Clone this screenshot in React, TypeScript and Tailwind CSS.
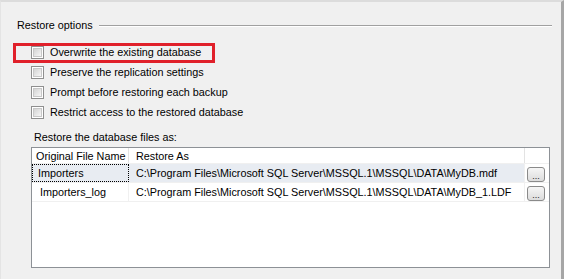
import React from "react";

const font = { fontFamily: '"Liberation Sans", Arial, sans-serif' };

const options = [
  "Overwrite the existing database",
  "Preserve the replication settings",
  "Prompt before restoring each backup",
  "Restrict access to the restored database",
];

const files = [
  { name: "Importers", path: "C:\\Program Files\\Microsoft SQL Server\\MSSQL.1\\MSSQL\\DATA\\MyDB.mdf", selected: true },
  { name: "Importers_log", path: "C:\\Program Files\\Microsoft SQL Server\\MSSQL.1\\MSSQL\\DATA\\MyDB_1.LDF", selected: false },
];

function CheckBox() {
  return (
    <span className="block h-[13px] w-[13px] shrink-0 border border-[#8f8f8f] bg-white p-px">
      <span className="block h-full w-full border border-[#c8c8c8] bg-gradient-to-br from-[#d4d4d4] to-[#f6f6f6]" />
    </span>
  );
}

function BrowseButton() {
  return (
    <button className="flex h-[15px] w-[18px] items-end justify-center rounded-[3px] border border-[#8a8a8a] bg-gradient-to-b from-[#f6f6f6] to-[#dcdcdc] pb-[2px] text-[9px] leading-[6px] text-[#222]">
      ...
    </button>
  );
}

export default function App() {
  return (
    <div
      className="relative h-[279px] w-[564px] overflow-hidden border-t-2 border-l border-r-[3px] border-t-[#dcdcdc] border-l-[#e4e4e4] border-r-[#a6a6a6] bg-[#f0f0f0] text-[10.8px] text-black"
      style={font}
    >
      {/* group header */}
      <div className="ml-[16px] mt-[17px] flex h-[13px] items-center gap-[6px] pr-[9px]">
        <span className="leading-[13px]">Restore options</span>
        <span className="mt-px h-[2px] flex-1 border-t border-b border-t-[#a0a0a0] border-b-white" />
      </div>

      {/* options */}
      <div className="ml-[30px] mt-[14px] flex flex-col">
        {options.map((o) => (
          <label key={o} className="flex h-[20px] items-start gap-[6px]">
            <CheckBox />
            <span className="leading-[13px]">{o}</span>
          </label>
        ))}
      </div>

      {/* highlight annotation */}
      <div className="absolute left-[12px] top-[41px] h-[20px] w-[202px] border-[3px] border-[#e0202a]" />

      {/* file list */}
      <div className="ml-[33px] mt-[5px] leading-[13px]">Restore the database files as:</div>
      <div className="ml-[30px] mt-[3px] h-[121px] w-[519px] border border-[#8d9196] bg-white">
        <div className="flex h-[16px] border-b border-[#f0f0f0] bg-white leading-[16px]">
          <div className="w-[97px] border-r border-[#e3e3e3] pl-[4px]">Original File Name</div>
          <div className="w-[396px] border-r border-[#e3e3e3] pl-[7px]">Restore As</div>
          <div className="flex-1" />
        </div>
        {files.map((f) => (
          <div key={f.name} className="flex h-[19px] border-b border-[#f0f0f0]">
            <div
              className={
                f.selected
                  ? "w-[97px] border border-dotted border-black bg-[#e8ecf2] pl-[5px] leading-[17px]"
                  : "w-[97px] border-r border-[#f0f0f0] pl-[8px] leading-[18px]"
              }
            >
              {f.name}
            </div>
            <div
              className={
                "w-[396px] border-r border-[#f0f0f0] pl-[7px] leading-[18px] " +
                (f.selected ? "bg-[#e8ecf2]" : "")
              }
            >
              {f.path}
            </div>
            <div className="flex flex-1 items-start pl-[2px] pt-[3px]">
              <BrowseButton />
            </div>
          </div>
        ))}
      </div>
    </div>
  );
}
